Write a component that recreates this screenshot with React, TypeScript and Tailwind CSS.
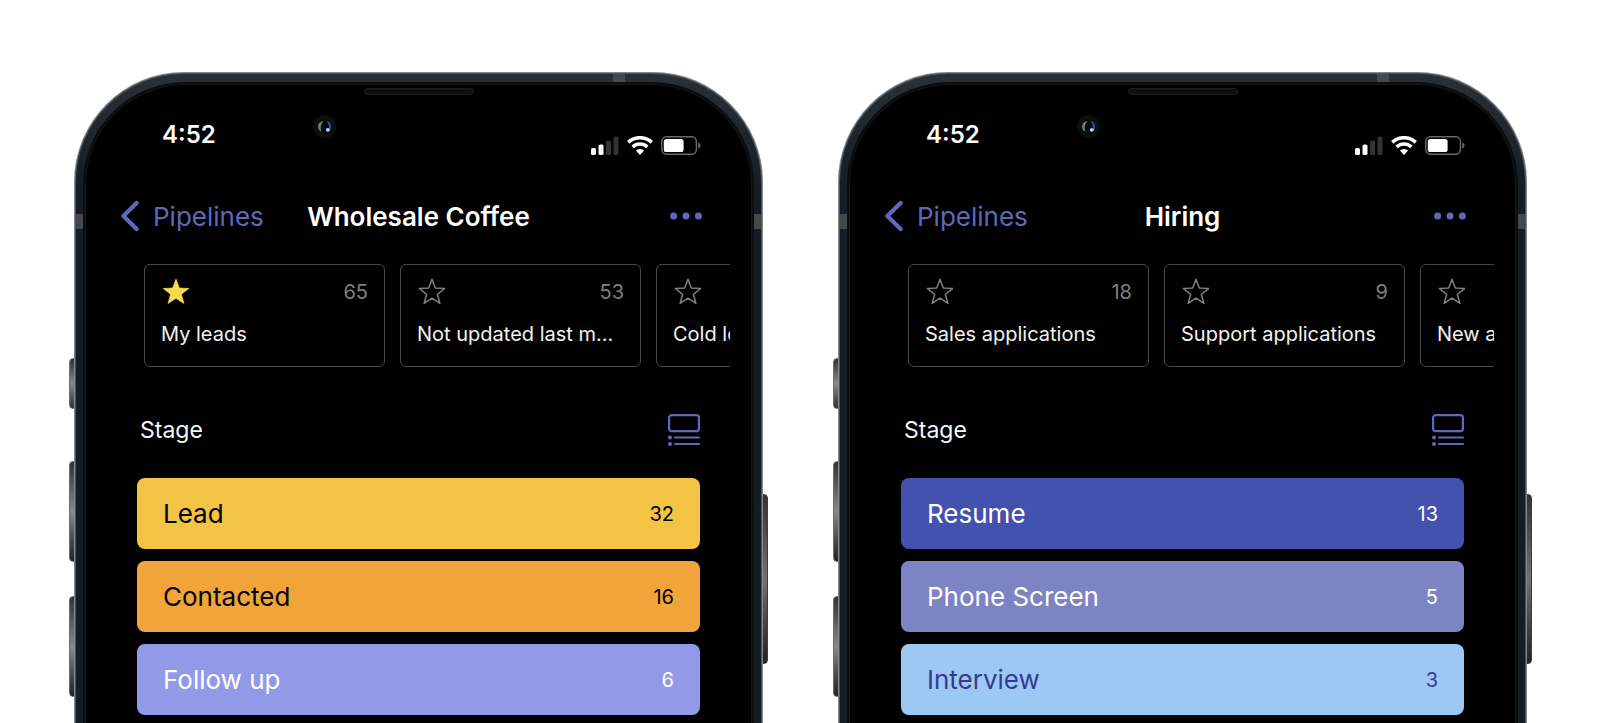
type Filter = { name: string; count?: number; starred?: boolean };
type Stage = { name: string; count: number; className: string };

type Pipeline = {
  title: string;
  filters: Filter[];
  stages: Stage[];
};

const pipelines: Pipeline[] = [
  {
    title: "Wholesale Coffee",
    filters: [
      { name: "My leads", count: 65, starred: true },
      { name: "Not updated last month", count: 53 },
      { name: "Cold leads" },
    ],
    stages: [
      { name: "Lead", count: 32, className: "bg-[#f3c444] text-black" },
      { name: "Contacted", count: 16, className: "bg-[#f1a43a] text-black" },
      { name: "Follow up", count: 6, className: "bg-[#9299e8] text-white" },
    ],
  },
  {
    title: "Hiring",
    filters: [
      { name: "Sales applications", count: 18 },
      { name: "Support applications", count: 9 },
      { name: "New applications" },
    ],
    stages: [
      { name: "Resume", count: 13, className: "bg-[#4351af] text-white" },
      { name: "Phone Screen", count: 5, className: "bg-[#7c84c4] text-white" },
      { name: "Interview", count: 3, className: "bg-[#9cc8f3] text-[#373a8e]" },
    ],
  },
];

const SignalIcon = () => (
  <svg width="28" height="19" viewBox="0 0 28 19" aria-hidden="true">
    <rect x="0" y="12" width="5" height="7" rx="1.6" fill="#fff" />
    <rect x="7.5" y="8.5" width="5" height="10.5" rx="1.6" fill="#fff" />
    <rect x="15" y="4.5" width="5" height="14.5" rx="1.6" fill="#333" />
    <rect x="22.5" y="0.5" width="5" height="18.5" rx="1.6" fill="#333" />
  </svg>
);

const WifiIcon = () => (
  <svg width="26" height="19" viewBox="0 0 26 19" aria-hidden="true">
    <g fill="none" stroke="#fff" strokeWidth="3.6">
      <path d="M1.3 6.4a17 17 0 0 1 23.4 0" />
      <path d="M5.6 10.9a10.7 10.7 0 0 1 14.8 0" />
    </g>
    <path d="M13 18.9l-4.1-4.3a5.9 5.9 0 0 1 8.2 0z" fill="#fff" />
  </svg>
);

const BatteryIcon = () => (
  <svg width="40" height="19" viewBox="0 0 40 19" aria-hidden="true">
    <rect x="0.8" y="0.8" width="34.6" height="17.4" rx="4.6" fill="none" stroke="#6a6a6a" strokeWidth="1.4" />
    <rect x="2.8" y="3" width="19.8" height="13" rx="2.6" fill="#fff" />
    <path d="M37.2 6.6c1.5.5 2.3 1.6 2.3 2.9s-.8 2.4-2.3 2.9z" fill="#6a6a6a" />
  </svg>
);

const StarIcon = ({ filled }: { filled?: boolean }) => (
  <svg width="28" height="28" viewBox="-1 0 28 28" aria-hidden="true">
    <path
      d="M14 1.2L17.3 10.1 26.7 10.5 19.3 16.3 21.9 25.4 14 20.2 6.1 25.4 8.7 16.3 1.3 10.5 10.7 10.1z"
      fill={filled ? "#fad94b" : "none"}
      stroke={filled ? "#fad94b" : "#7f7f83"}
      strokeWidth={filled ? 0.8 : 1.5}
      strokeLinejoin="round"
    />
  </svg>
);

const ListViewIcon = () => (
  <svg width="32" height="32" viewBox="0 0 32 32" fill="none" stroke="#5f68bb" aria-hidden="true">
    <rect x="1.1" y="1.2" width="29.8" height="16" rx="2.4" strokeWidth="2.2" />
    <path d="M7 23.5h24M7 30h24" strokeWidth="2.2" strokeLinecap="round" />
    <circle cx="2" cy="23.5" r="2" fill="#5f68bb" stroke="none" />
    <circle cx="2" cy="30" r="2" fill="#5f68bb" stroke="none" />
  </svg>
);

const Camera = () => (
  <svg className="absolute left-[227px] top-[30px]" width="23" height="23" viewBox="0 0 23 23" aria-hidden="true">
    <circle cx="11.5" cy="11.5" r="11.5" fill="#0e0e0e" />
    <circle cx="11.5" cy="11.5" r="7" fill="#060809" />
    <path d="M10.5 6c-3.4.3-5.4 2.7-5.4 5.5s1.3 4.7 3.5 5.3c-.8-1.6-1-3.4-.7-5.2.3-2.2 1.2-3.9 2.6-5.6z" fill="#5d8570" />
    <path d="M13.5 5.5c3.2.8 4.7 3.3 4.6 6.2-.1 2-1 3.9-2.4 4.9.3-2 .3-4.3-.1-6.3-.4-1.9-1.1-3.4-2.1-4.8z" fill="#1d5496" />
    <circle cx="14.8" cy="14.8" r="1.9" fill="#c3d4ee" />
  </svg>
);

const StatusBar = () => (
  <div className="flex items-end justify-between pl-[76px] pr-[50px] pt-6">
    <span className="pb-1 text-2xl font-semibold text-white">4:52</span>
    <div className="flex items-center gap-2">
      <SignalIcon />
      <WifiIcon />
      <BatteryIcon />
    </div>
  </div>
);

const FilterCard = ({ name, count, starred }: Filter) => (
  <button className="flex h-[103px] w-[241px] shrink-0 flex-col rounded-md border border-[#4a4a4a] px-4 pt-[13px] text-left">
    <span className="flex w-full items-center justify-between">
      <StarIcon filled={starred} />
      <span className="text-xl text-[#7f7f83]">{count}</span>
    </span>
    <span className="mt-[14px] w-full truncate text-xl text-[#f2f2f2]">{name}</span>
  </button>
);

const StageRow = ({ name, count, className }: Stage) => (
  <button className={`flex h-[71px] items-center justify-between rounded-lg px-[26px] ${className}`}>
    <span className="text-[26px]">{name}</span>
    <span className="text-xl">{count}</span>
  </button>
);

const PhoneFrame = ({ children }: { children: React.ReactNode }) => (
  <div className="relative flex min-w-0 flex-1 flex-col">
    {/* Side buttons */}
    <div className="absolute -left-[5px] top-[286px] h-[51px] w-[6px] rounded-l-sm border border-[#6b6d6b] bg-linear-to-b from-[#333] via-[#8a8a8a] to-[#333]" />
    <div className="absolute -left-[5px] top-[389px] h-[101px] w-[6px] rounded-l-sm border border-[#6b6d6b] bg-linear-to-b from-[#333] via-[#8a8a8a] to-[#222]" />
    <div className="absolute -left-[5px] top-[524px] h-[101px] w-[6px] rounded-l-sm border border-[#6b6d6b] bg-linear-to-b from-[#333] via-[#8a8a8a] to-[#222]" />
    <div className="absolute -right-[5px] top-[422px] h-[170px] w-[6px] rounded-r-sm border border-[#3c3c3c] bg-linear-to-b from-[#333] via-[#737070] to-[#222]" />

    <div className="relative flex flex-1 flex-col overflow-hidden rounded-t-[110px] bg-[#85888a] px-px pt-px">
      <div className="flex flex-1 flex-col rounded-t-[109px] border border-b-0 border-[#4d5255] bg-[#151c23] bg-linear-to-b from-[#2b3035] to-[#151c23] to-[120px] px-[7px] pt-2">
        <div className="flex flex-1 flex-col rounded-t-[102px] border-2 border-b-0 border-[#0c0d0e] bg-black">
          <div className="flex flex-1 flex-col rounded-t-[100px] border border-b-0 border-[#171717]">
            {children}
          </div>
        </div>
      </div>
      {/* Antenna bands */}
      <div className="absolute right-[138px] top-[2px] h-2 w-3 bg-[#454a4c]" />
      <div className="absolute left-[2px] top-[142px] h-[15px] w-[7px] bg-[#454749]" />
      <div className="absolute right-[2px] top-[142px] h-[15px] w-[7px] bg-[#454749]" />
    </div>
  </div>
);

const PipelineScreen = ({ title, filters, stages }: Pipeline) => (
  <div className="relative flex flex-1 flex-col pb-2">
    <div className="mx-auto mt-[3px] h-[7px] w-[110px] rounded-full border border-[#1e1e1e] bg-[#101010]" />
    <Camera />
    <StatusBar />

    <header className="mt-[33px] grid h-14 grid-cols-[1fr_auto_1fr] items-center px-[35px]">
      <a href="#" className="flex items-center gap-[14px] text-[26px] text-[#5f68bb]">
        <svg width="18" height="32" viewBox="0 0 18 32" fill="none" aria-hidden="true">
          <path d="M15.6 3L2.4 16l13.2 13" stroke="#5f68bb" strokeWidth="4.2" strokeLinecap="round" strokeLinejoin="round" />
        </svg>
        Pipelines
      </a>
      <h1 className="text-[26px] font-semibold text-white">{title}</h1>
      <button aria-label="More" className="mr-[14px] justify-self-end">
        <svg width="32" height="8" viewBox="0 0 32 8" fill="#5f68bb" aria-hidden="true">
          <circle cx="3.6" cy="4" r="3.5" />
          <circle cx="16" cy="4" r="3.5" />
          <circle cx="28.4" cy="4" r="3.5" />
        </svg>
      </button>
    </header>

    <div className="ml-[58px] mr-[21px] mt-5 flex gap-[15px] overflow-hidden">
      {filters.map((filter) => (
        <FilterCard key={filter.name} {...filter} />
      ))}
    </div>

    <div className="mt-[47px] flex items-center justify-between pl-[54px] pr-[51px]">
      <h2 className="text-[23px] leading-8 text-[#f7f7f7]">Stage</h2>
      <button aria-label="Change view">
        <ListViewIcon />
      </button>
    </div>

    <div className="mt-8 flex flex-col gap-3 px-[51px]">
      {stages.map((stage) => (
        <StageRow key={stage.name} {...stage} />
      ))}
    </div>
  </div>
);

const App = () => {
  return (
    <main className="flex min-h-screen gap-[75px] overflow-hidden bg-white pl-[74px] pr-[73px] pt-[72px] font-['Inter',sans-serif]">
      {pipelines.map((pipeline) => (
        <PhoneFrame key={pipeline.title}>
          <PipelineScreen {...pipeline} />
        </PhoneFrame>
      ))}
    </main>
  );
};

export default App;
